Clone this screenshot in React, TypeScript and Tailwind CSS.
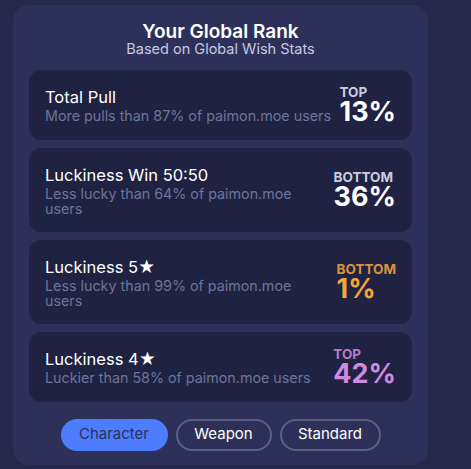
const rows = [
  {
    title: "Total Pull",
    desc: "More pulls than 87% of paimon.moe users",
    label: "TOP",
    value: "13%",
    labelColor: "text-[#c9cde0]",
    valueColor: "text-white",
  },
  {
    title: "Luckiness Win 50:50",
    desc: "Less lucky than 64% of paimon.moe users",
    label: "BOTTOM",
    value: "36%",
    labelColor: "text-[#c9cde0]",
    valueColor: "text-white",
  },
  {
    title: "Luckiness 5★",
    desc: "Less lucky than 99% of paimon.moe users",
    label: "BOTTOM",
    value: "1%",
    labelColor: "text-[#d8943a]",
    valueColor: "text-[#f5a63a]",
  },
  {
    title: "Luckiness 4★",
    desc: "Luckier than 58% of paimon.moe users",
    label: "TOP",
    value: "42%",
    labelColor: "text-[#b57bc6]",
    valueColor: "text-[#d28ae0]",
  },
];

export default function App() {
  return (
    <div
      className="h-[469px] w-[471px] bg-[#25284a] pt-[5px] pl-[13px]"
      style={{ fontFamily: "Inter, 'Noto Sans', sans-serif" }}
    >
      <div className="flex h-[460px] w-[415px] flex-col rounded-2xl bg-[#2d3159] px-4 pt-[17px]">
        <div className="text-center leading-none">
          <h1 className="text-[19px] font-semibold text-white">Your Global Rank</h1>
          <p className="mt-[1px] text-[14.5px] text-[#c4c9e4]">Based on Global Wish Stats</p>
        </div>

        <div className="mt-[13px] flex flex-col gap-2">
          {rows.map((r) => (
            <div
              key={r.title}
              className="flex min-h-[70px] items-center gap-[6px] rounded-xl bg-[#202242] px-4 py-4"
            >
              <div className="flex-1">
                <div className="text-[16.5px] leading-[22px] text-white">{r.title}</div>
                <div className="text-[14.3px] leading-[15px] text-[#6b7599]">{r.desc}</div>
              </div>
              <div className="flex flex-col items-start font-bold">
                <span className={`text-[13.5px] leading-[13px] ${r.labelColor}`}>{r.label}</span>
                <span className={`text-[27px] leading-[25px] ${r.valueColor}`}>{r.value}</span>
              </div>
            </div>
          ))}
        </div>

        <div className="mt-[17px] flex justify-center gap-2 text-[15px]">
          <button className="h-8 w-[107px] rounded-full bg-[#4e7cff] text-[#2d3159]">Character</button>
          <button className="h-8 w-[96px] rounded-full border-2 border-[#5c6182] text-white">Weapon</button>
          <button className="h-8 w-[101px] rounded-full border-2 border-[#5c6182] text-white">Standard</button>
        </div>
      </div>
    </div>
  );
}
